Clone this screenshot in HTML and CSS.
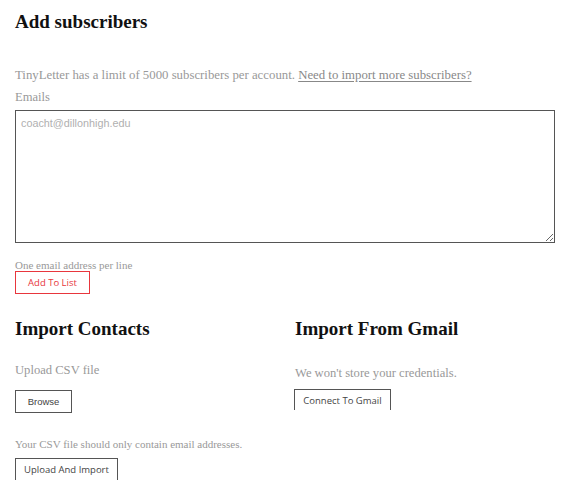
FILE: index.html
```html
<!DOCTYPE html>
<html>
<head>
<meta charset="utf-8">
<link rel="stylesheet" href="styles.css">
</head>
<body>
<div class="page">
  <h1 class="title">Add subscribers</h1>
  <p class="info">TinyLetter has a limit of 5000 subscribers per account. <a class="link" href="#">Need to import more subscribers?</a></p>
  <label class="label">Emails</label>
  <textarea class="emails" placeholder="coacht@dillonhigh.edu"></textarea>
  <p class="hint">One email address per line</p>
  <button class="btn btn-red">Add To List</button>
  <div class="cols">
    <div class="col">
      <h2 class="subtitle">Import Contacts</h2>
      <p class="note">Upload CSV file</p>
      <button class="btn btn-browse">Browse</button>
      <p class="hint hint-csv">Your CSV file should only contain email addresses.</p>
      <button class="btn btn-open btn-upload">Upload And Import</button>
    </div>
    <div class="col">
      <h2 class="subtitle">Import From Gmail</h2>
      <p class="note note-gmail">We won't store your credentials.</p>
      <button class="btn btn-open btn-gmail">Connect To Gmail</button>
    </div>
  </div>
</div>
</body>
</html>
```

FILE: styles.css
```css
html, body {
  margin: 0;
  padding: 0;
  background: #fff;
  overflow: hidden;
}
.page {
  width: 540px;
  margin-left: 15px;
  font-family: "Liberation Serif", "DejaVu Serif", serif;
  color: #999;
}
.title {
  margin: 0;
  padding-top: 10px;
  font-size: 19px;
  line-height: 24px;
  font-weight: bold;
  color: #111;
}
.info {
  margin: 34px 0 0;
  font-size: 12.8px;
  line-height: 14px;
  color: #999;
}
.link {
  color: #888;
  text-decoration: underline;
  text-underline-offset: 2px;
}
.label {
  display: block;
  margin-top: 8px;
  font-size: 12.6px;
  line-height: 14px;
  color: #999;
}
.emails {
  display: block;
  box-sizing: border-box;
  width: 540px;
  height: 133px;
  margin-top: 6px;
  border: 1px solid #555;
  border-radius: 0;
  padding: 6px 5px;
  font-family: "Liberation Sans", Arial, sans-serif;
  font-size: 10.8px;
  color: #333;
  resize: vertical;
  outline: none;
}
.emails::placeholder {
  color: #b0b0b0;
}
.hint {
  margin: 16px 0 0;
  font-size: 11px;
  line-height: 12px;
  color: #999;
}
.btn {
  display: block;
  box-sizing: border-box;
  background: #fff;
  border: 1px solid #555;
  border-radius: 0;
  padding: 0;
  text-align: center;
  white-space: nowrap;
  font-family: "Open Sans", "Liberation Sans", sans-serif;
  font-size: 9.5px;
  color: #444;
  cursor: pointer;
}
.btn-red {
  margin-top: 0;
  width: 75px;
  height: 23px;
  border-color: #e8363d;
  color: #e8363d;
}
.cols {
  display: grid;
  grid-template-columns: 280px 260px;
  margin-top: 24px;
}
.subtitle {
  margin: 0;
  font-size: 19px;
  line-height: 22px;
  font-weight: bold;
  color: #111;
}
.note {
  margin: 23px 0 0;
  font-size: 12.6px;
  line-height: 14px;
  color: #999;
}
.note-gmail {
  margin-top: 26px;
}
.btn-browse {
  margin-top: 13px;
  width: 57px;
  height: 23px;
  font-family: "Liberation Sans", Arial, sans-serif;
}
.hint-csv {
  margin-top: 25px;
}
.btn-open {
  border-bottom: none;
}
.btn-upload {
  margin-top: 8px;
  width: 103px;
  height: 22px;
}
.btn-gmail {
  margin-top: 9px;
  margin-left: -1px;
  width: 97px;
  height: 21px;
}
```
